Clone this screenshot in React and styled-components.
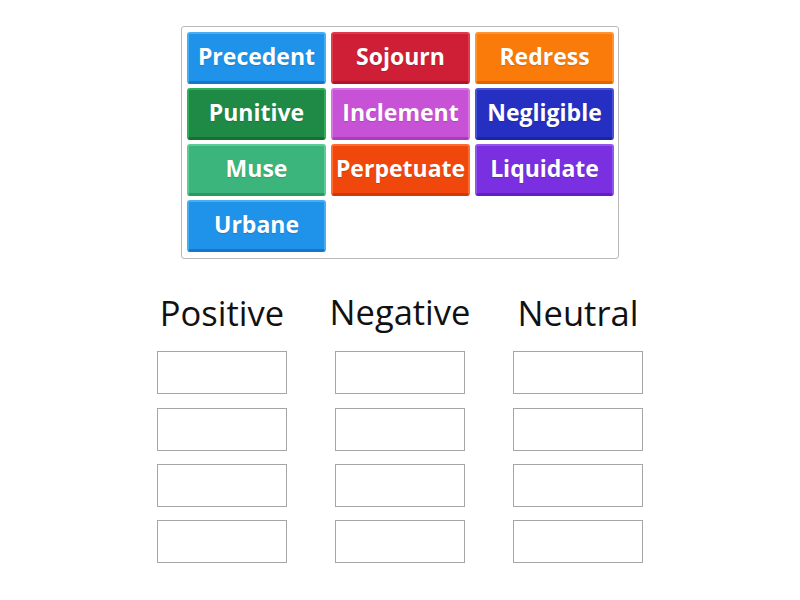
import React from 'react'
import styled, { createGlobalStyle } from 'styled-components'

const GlobalStyle = createGlobalStyle`
  body {
    margin: 0;
    background: #fff;
    font-family: "Open Sans", "Liberation Sans", sans-serif;
  }
`

const tiles = [
  { label: 'Precedent', face: '#1f93ea', edge: '#48aef2', dark: '#1677c8' },
  { label: 'Sojourn', face: '#cf1f36', edge: '#e03a4c', dark: '#ae1528' },
  { label: 'Redress', face: '#fa7a0a', edge: '#ff9532', dark: '#df6500' },
  { label: 'Punitive', face: '#1f8a46', edge: '#2fae5c', dark: '#176f37' },
  { label: 'Inclement', face: '#c752d6', edge: '#d676e0', dark: '#a83fb8' },
  { label: 'Negligible', face: '#2530c2', edge: '#4752d6', dark: '#1c25a0' },
  { label: 'Muse', face: '#3bb57c', edge: '#5ccb95', dark: '#2c9864' },
  { label: 'Perpetuate', face: '#f0480c', edge: '#ff6b33', dark: '#cc3a06' },
  { label: 'Liquidate', face: '#7a2fe0', edge: '#9356ea', dark: '#6220c0' },
  { label: 'Urbane', face: '#1f93ea', edge: '#48aef2', dark: '#1677c8' },
]

const groups = ['Positive', 'Negative', 'Neutral']

export default function App() {
  return (
    <Page>
      <GlobalStyle />
      <Bank>
        {tiles.map(t => (
          <Tile key={t.label} $face={t.face} $edge={t.edge} $dark={t.dark}>
            {t.label}
          </Tile>
        ))}
      </Bank>
      <Groups>
        {groups.map(g => (
          <Group key={g}>
            <Heading $raise={g === 'Negative'}>{g}</Heading>
            {[0, 1, 2, 3].map(i => (
              <Slot key={i} />
            ))}
          </Group>
        ))}
      </Groups>
    </Page>
  )
}

const Page = styled.div`
  width: 800px;
  height: 600px;
  display: flex;
  flex-direction: column;
  align-items: center;
  padding-top: 26px;
  box-sizing: border-box;
`

const Bank = styled.div`
  width: 438px;
  box-sizing: border-box;
  border: 1px solid #b9b9b9;
  border-radius: 3px;
  padding: 5px 5px 6px 5px;
  display: grid;
  grid-template-columns: repeat(3, 139px);
  grid-auto-rows: 52px;
  column-gap: 5px;
  row-gap: 4px;
`

const Tile = styled.div`
  box-sizing: border-box;
  display: flex;
  align-items: center;
  justify-content: center;
  background: ${p => p.$face};
  border: 2px solid ${p => p.$edge};
  border-bottom: 3px solid ${p => p.$dark};
  border-radius: 3px;
  color: #fff;
  font-family: "Open Sans", "Liberation Sans", sans-serif;
  font-weight: 700;
  font-size: 23px;
  padding-bottom: 3px;
  white-space: nowrap;
  text-shadow: 0 1px 1px rgba(0, 0, 0, 0.15);
`

const Groups = styled.div`
  display: flex;
  gap: 48px;
  margin-top: 32px;
`

const Group = styled.div`
  width: 130px;
  display: flex;
  flex-direction: column;
  align-items: center;
  gap: 13.3px;
`

const Heading = styled.div`
  font-family: "Open Sans", "Liberation Sans", sans-serif;
  font-size: 34.5px;
  color: #111;
  line-height: 44px;
  height: 44px;
  margin-bottom: 3px;
  white-space: nowrap;
  position: relative;
  top: ${p => (p.$raise ? '-1px' : '0')};
`

const Slot = styled.div`
  width: 130px;
  height: 43px;
  box-sizing: border-box;
  border: 1px solid #a6a6a6;
  background: #fff;
`
